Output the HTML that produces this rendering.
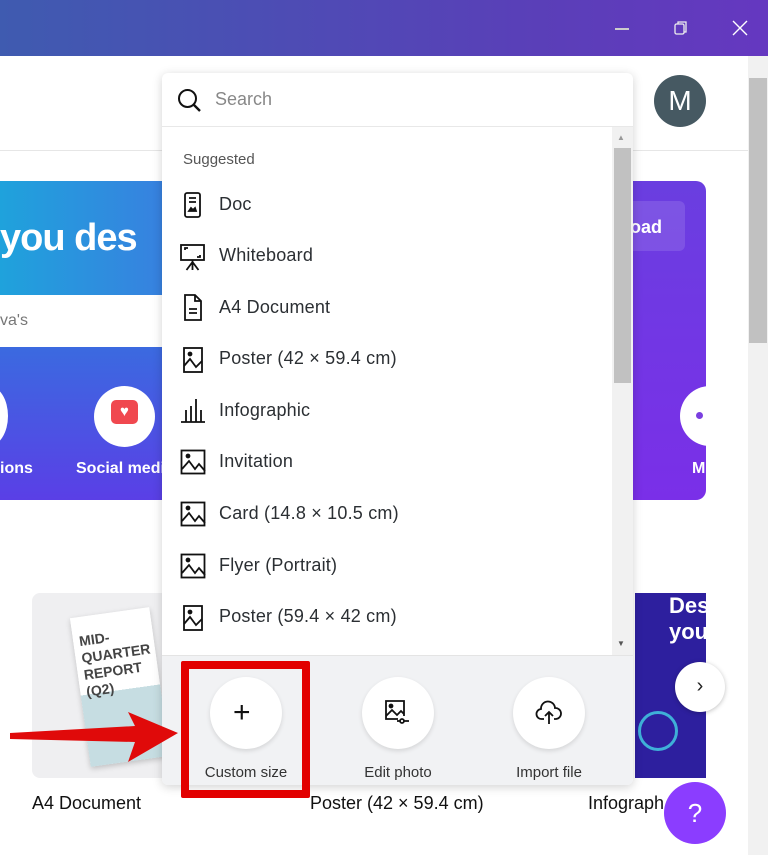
<!DOCTYPE html>
<html><head><style>
*{margin:0;padding:0;box-sizing:border-box}
body{width:768px;height:855px;overflow:hidden;position:relative;background:#fff;font-family:"Liberation Sans",sans-serif;color:#222}
.abs{position:absolute}
.it{position:absolute;left:219px;font-size:18px;color:#2b2f33;letter-spacing:0.2px}
.ic{position:absolute;left:180px}
.lbl{position:absolute;font-size:15px;color:#333;width:140px;text-align:center}
.circ{position:absolute;width:72px;height:72px;border-radius:50%;background:#fff;box-shadow:0 2px 5px rgba(0,0,0,.12)}
</style></head><body>
<div class="abs" style="left:0;top:0;width:768px;height:56px;background:linear-gradient(90deg,#3f5bb0,#5a3fb8 70%,#6538c0)"></div>
<div class="abs" style="left:615px;top:28px;width:14px;height:1.5px;background:#ccc"></div>
<svg class="abs" style="left:672px;top:19px" width="18" height="18" viewBox="0 0 18 18" fill="none" stroke="#eee" stroke-width="1.3"><rect x="3" y="5" width="9" height="10" rx="1.5"/><path d="M6 5V3h8v10h-2"/></svg>
<svg class="abs" style="left:732px;top:20px" width="16" height="16" viewBox="0 0 16 16" stroke="#fff" stroke-width="1.4"><path d="M1 1l14 14M15 1L1 15"/></svg>
<div class="abs" style="left:0;top:150px;width:748px;height:1px;background:#e6e6e6"></div>
<div class="abs" style="left:654px;top:75px;width:52px;height:52px;border-radius:50%;background:#465962;color:#fff;font-size:28px;text-align:center;line-height:52px">M</div>
<div class="abs" style="left:748px;top:56px;width:20px;height:799px;background:#f1f1f1"></div>
<div class="abs" style="left:749px;top:78px;width:18px;height:265px;background:#c1c1c1"></div>
<div class="abs" style="left:0;top:181px;width:180px;height:114px;background:linear-gradient(90deg,#1fa2dc,#3a7ee0)"></div>
<div class="abs" style="left:0;top:217px;color:#fff;font-size:38px;font-weight:bold;letter-spacing:-1px">you des</div>
<div class="abs" style="left:0;top:312px;color:#777;font-size:16px">va's</div>
<div class="abs" style="left:0;top:347px;width:180px;height:153px;background:linear-gradient(180deg,#3b6ae0,#5a3fe6)"></div>
<div class="abs" style="left:-30px;top:386px;width:38px;height:60px;border-radius:50%;background:#fff"></div>
<div class="abs" style="left:94px;top:386px;width:61px;height:61px;border-radius:50%;background:#fff"></div>
<div class="abs" style="left:111px;top:400px;width:27px;height:24px;border-radius:5px;background:#f0484f;color:#fff;font-size:15px;text-align:center;line-height:24px">♥</div>
<div class="abs" style="left:0;top:460px;color:#fff;font-size:16px;font-weight:bold">ions</div>
<div class="abs" style="left:76px;top:460px;color:#fff;font-size:16px;font-weight:bold">Social medi</div>
<div class="abs" style="left:597px;top:181px;width:109px;height:319px;border-radius:0 10px 10px 0;background:linear-gradient(180deg,#6a3ee0,#7a2fe8)"></div>
<div class="abs" style="left:600px;top:201px;width:85px;height:50px;border-radius:6px;background:rgba(255,255,255,.12);color:#fff;font-size:18px;font-weight:bold;padding:16px 0 0 30px">oad</div>
<div class="abs" style="left:680px;top:386px;width:40px;height:60px;border-radius:30px 0 0 30px;background:#fff"></div>
<div class="abs" style="left:696px;top:412px;width:7px;height:7px;border-radius:50%;background:#7a3fe0"></div>
<div class="abs" style="left:692px;top:460px;color:#fff;font-size:16px;font-weight:bold">M</div>
<div class="abs" style="left:32px;top:593px;width:140px;height:185px;border-radius:8px;background:#efeff1"></div>
<div class="abs" style="left:80px;top:612px;width:80px;height:150px;background:linear-gradient(180deg,#fff 52%,#c6dde2 52%);transform:rotate(-8deg);box-shadow:0 2px 6px rgba(0,0,0,.2);font-family:'Liberation Sans Narrow','Liberation Sans',sans-serif;font-size:14px;font-weight:bold;color:#444;padding:16px 6px;line-height:17px">MID-<br>QUARTER<br>REPORT<br>(Q2)</div>
<div class="abs" style="left:635px;top:593px;width:71px;height:185px;background:#2d1f9e;overflow:hidden"><div style="color:#fff;font-size:22px;padding:0 0 0 34px;font-weight:bold">Des<br>you</div><div style="position:absolute;left:3px;top:118px;width:40px;height:40px;border-radius:50%;border:3px solid #3fb0d8"></div></div>
<div class="abs" style="left:32px;top:793px;font-size:18px;color:#111">A4 Document</div>
<div class="abs" style="left:310px;top:793px;font-size:18px;color:#111">Poster (42 × 59.4 cm)</div>
<div class="abs" style="left:588px;top:793px;font-size:18px;color:#111">Infograph</div>
<div class="abs" style="left:675px;top:662px;width:50px;height:50px;border-radius:50%;background:#fff;box-shadow:0 1px 5px rgba(0,0,0,.25);text-align:center;line-height:48px;font-size:20px">›</div>
<div class="abs" style="left:664px;top:782px;width:62px;height:62px;border-radius:50%;background:#8b3dff;color:#fff;font-size:26px;text-align:center;line-height:62px">?</div>
<div class="abs" style="left:162px;top:73px;width:471px;height:712px;background:#fff;border-radius:6px;box-shadow:0 2px 10px rgba(0,0,0,.18);overflow:hidden">
 <div class="abs" style="left:0;top:53px;width:471px;height:1px;background:#e8e8e8"></div>
 <div class="abs" style="left:450px;top:54px;width:21px;height:528px;background:#f1f1f1"></div>
 <div class="abs" style="left:452px;top:75px;width:17px;height:235px;background:#c1c1c1"></div>
 <div class="abs" style="left:455px;top:60px;font-size:8px;color:#999">▲</div>
 <div class="abs" style="left:455px;top:566px;font-size:8px;color:#555">▼</div>
 <div class="abs" style="left:0;top:582px;width:471px;height:130px;background:#f1f2f4;border-top:1px solid #e4e4e4"></div>
</div>
<svg class="abs" style="left:176px;top:87px" width="28" height="28" viewBox="0 0 28 28"><circle cx="11.5" cy="11.5" r="8.5" fill="none" stroke="#111" stroke-width="2"/><path d="M18 18l6 6" stroke="#111" stroke-width="2.4"/></svg>
<div class="abs" style="left:215px;top:89px;font-size:18px;color:#888">Search</div>
<div class="abs" style="left:183px;top:151px;font-size:15px;color:#555">Suggested</div>
<svg class="ic" style="top:192px" width="26" height="26" viewBox="0 0 26 26" fill="none" stroke="#111" stroke-width="1.8"><rect x="5" y="1" width="15" height="24" rx="2"/><path d="M9 6h7M9 10h7"/><path d="M9 19l2-3 2 2 2-2 1 3z" fill="#111"/></svg>
<div class="it" style="top:194px">Doc</div>
<svg class="ic" style="top:243px" width="26" height="28" viewBox="0 0 26 28" fill="none" stroke="#111" stroke-width="1.8"><rect x="1" y="2" width="23" height="15"/><path d="M12.5 17v10M12.5 19l-6 8M12.5 19l6 8M5 7V5h3M20 12v2h-3"/></svg>
<div class="it" style="top:245px">Whiteboard</div>
<svg class="ic" style="top:294px" width="26" height="28" viewBox="0 0 26 28" fill="none" stroke="#111" stroke-width="1.8"><path d="M5 1h10l6 6v19H5z M15 1v6h6 M9 15h8M9 19h8"/></svg>
<div class="it" style="top:297px">A4 Document</div>
<svg class="ic" style="top:346px" width="26" height="28" viewBox="0 0 26 28" fill="none" stroke="#111" stroke-width="1.8"><rect x="4" y="2" width="18" height="24"/><circle cx="10" cy="8" r="1.5" fill="#111"/><path d="M4 20l6-7 6 8 6-6"/></svg>
<div class="it" style="top:348px">Poster (42 × 59.4 cm)</div>
<svg class="ic" style="top:398px" width="26" height="26" viewBox="0 0 26 26" fill="none" stroke="#111" stroke-width="1.8"><path d="M1 24h24M6 24V12M11 24V8M16 24V1M21 24V12"/></svg>
<div class="it" style="top:400px">Infographic</div>
<svg class="ic" style="top:449px" width="26" height="26" viewBox="0 0 26 26" fill="none" stroke="#111" stroke-width="1.8"><rect x="1.5" y="1.5" width="23" height="23"/><circle cx="8" cy="7" r="1.5" fill="#111"/><path d="M2 20l7-8 6 8 4-5 6 7"/></svg>
<div class="it" style="top:451px">Invitation</div>
<svg class="ic" style="top:501px" width="26" height="26" viewBox="0 0 26 26" fill="none" stroke="#111" stroke-width="1.8"><rect x="1.5" y="1.5" width="23" height="23"/><circle cx="8" cy="7" r="1.5" fill="#111"/><path d="M2 20l7-8 6 8 4-5 6 7"/></svg>
<div class="it" style="top:503px">Card (14.8 × 10.5 cm)</div>
<svg class="ic" style="top:553px" width="26" height="26" viewBox="0 0 26 26" fill="none" stroke="#111" stroke-width="1.8"><rect x="1.5" y="1.5" width="23" height="23"/><circle cx="8" cy="7" r="1.5" fill="#111"/><path d="M2 20l7-8 6 8 4-5 6 7"/></svg>
<div class="it" style="top:555px">Flyer (Portrait)</div>
<svg class="ic" style="top:604px" width="26" height="28" viewBox="0 0 26 28" fill="none" stroke="#111" stroke-width="1.8"><rect x="4" y="2" width="18" height="24"/><circle cx="10" cy="8" r="1.5" fill="#111"/><path d="M4 20l6-7 6 8 6-6"/></svg>
<div class="it" style="top:606px">Poster (59.4 × 42 cm)</div>
<div class="circ" style="left:210px;top:677px"></div>
<div class="abs" style="left:233px;top:696px;font-size:30px;font-weight:300;color:#111">+</div>
<div class="circ" style="left:362px;top:677px"></div>
<svg class="abs" style="left:384px;top:699px" width="28" height="28" viewBox="0 0 28 28" fill="none" stroke="#111" stroke-width="1.8"><path d="M20 17V2H2v18h12"/><circle cx="7" cy="7" r="1.5" fill="#111"/><path d="M2 17l6-6 5 5 4-4 3 3"/><circle cx="18" cy="22" r="2"/><path d="M13 22h3M20 22h5"/></svg>
<div class="circ" style="left:513px;top:677px"></div>
<svg class="abs" style="left:535px;top:700px" width="28" height="26" viewBox="0 0 28 26" fill="none" stroke="#111" stroke-width="1.8"><path d="M9 19H7a5 5 0 0 1-1-10 7 7 0 0 1 14-1 5 5 0 0 1 1 11h-2"/><path d="M14 24V12M10 16l4-4 4 4"/></svg>
<div class="lbl" style="left:176px;top:764px">Custom size</div>
<div class="lbl" style="left:328px;top:764px">Edit photo</div>
<div class="lbl" style="left:479px;top:764px">Import file</div>
<div class="abs" style="left:181px;top:661px;width:129px;height:137px;border:8px solid #e20000;border-radius:2px"></div>
<svg class="abs" style="left:0;top:700px" width="185" height="70" viewBox="0 0 185 70"><path d="M10 33L135 26L128 12L178 33L128 62L135 42L10 39Z" fill="#e00a0a"/></svg>
</body></html>
